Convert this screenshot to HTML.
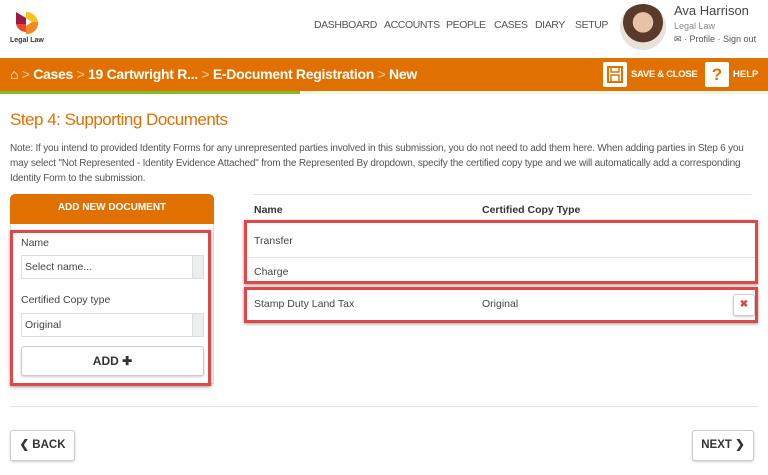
<!DOCTYPE html>
<html><head><meta charset="utf-8">
<style>
*{box-sizing:border-box;margin:0;padding:0}
body{width:768px;height:475px;background:#fff;font-family:"Liberation Sans",sans-serif;color:#444;position:relative;overflow:hidden}
.abs{position:absolute}
.nav{top:19px;font-size:10.5px;color:#555;letter-spacing:-0.4px}
.bar{left:0;top:58px;width:768px;height:33px;background:#e07000}
.green{left:0;top:91px;width:300px;height:3px;background:#7cbf2a}
.green2{left:300px;top:91px;width:468px;height:3px;background:#eef6e4}
.crumb{left:10px;top:66px;color:#fff;font-weight:bold;font-size:14px;white-space:nowrap;letter-spacing:-0.3px}
.crumb span{color:#f5c79a;font-weight:normal}
.btnw{background:#fff;border-radius:2px}
.red{border:3px solid #e04848;box-shadow:0 1px 3px rgba(0,0,0,.4)}
.sel{height:24px;border:1px solid #ddd;background:#fff;font-size:10.5px;padding:5px 3px;color:#444}
.sel i{position:absolute;right:0;top:0;width:11px;height:22px;background:#eee;border-left:1px solid #ddd}
.btn{border:1px solid #ccc;border-radius:3px;background:#fff;box-shadow:0 1px 2px rgba(0,0,0,.2);font-weight:bold;color:#333;font-size:11px;text-align:center}
.hl{height:1px;background:#e2e2e2}
.td{font-size:10.5px;color:#444}
</style></head><body>
<svg class="abs" style="left:14px;top:10px" width="26" height="26" viewBox="0 0 26 26">
<path d="M2 2 L12 8 L12 14 L2 14Z" fill="#9b1a45"/>
<path d="M2 14 L12 14 L12 22 A10 10 0 0 1 2 14Z" fill="#e84a2d"/>
<path d="M12 2 A12 12 0 0 1 24 12 L12 12Z" fill="#f7c21b"/>
<path d="M12 12 L24 12 A11 11 0 0 1 12 24Z" fill="#f38a1c"/>
<path d="M12 8 L18 12 L12 16Z" fill="#fff"/>
</svg>
<div class="abs" style="left:10px;top:37px;font-size:7px;font-weight:bold;color:#333">Legal Law</div>
<div class="abs nav" style="left:314px">DASHBOARD</div>
<div class="abs nav" style="left:384px">ACCOUNTS</div>
<div class="abs nav" style="left:446px">PEOPLE</div>
<div class="abs nav" style="left:494px">CASES</div>
<div class="abs nav" style="left:535px">DIARY</div>
<div class="abs nav" style="left:575px">SETUP</div>
<div class="abs" style="left:620px;top:4px;width:46px;height:46px;border-radius:50%;background:radial-gradient(circle at 50% 40%,#e8c2a8 0 28%,#5a3a2a 29% 55%,#e9e2da 56%)"></div>
<div class="abs" style="left:674px;top:3px;font-size:13px;color:#444">Ava Harrison</div>
<div class="abs" style="left:674px;top:21px;font-size:9px;color:#888">Legal Law</div>
<div class="abs" style="left:674px;top:34px;font-size:9px;color:#555">✉ · Profile · Sign out</div>

<div class="abs bar"></div>
<div class="abs green"></div><div class="abs green2"></div>
<div class="abs crumb">⌂ <span>&gt;</span> Cases <span>&gt;</span> 19 Cartwright R... <span>&gt;</span> E-Document Registration <span>&gt;</span> New</div>
<div class="abs btnw" style="left:603px;top:62px;width:24px;height:25px"><svg width="24" height="25"><rect x="5" y="5" width="14" height="15" fill="none" stroke="#e07000" stroke-width="2"/><rect x="8" y="5" width="8" height="5" fill="none" stroke="#e07000" stroke-width="1.5"/><rect x="8" y="13" width="8" height="7" fill="none" stroke="#e07000" stroke-width="1.5"/></svg></div>
<div class="abs" style="left:631px;top:69px;color:#fff;font-weight:bold;font-size:9.5px;letter-spacing:-0.3px">SAVE &amp; CLOSE</div>
<div class="abs btnw" style="left:705px;top:62px;width:24px;height:25px;color:#e07000;font-weight:bold;font-size:17px;text-align:center;line-height:25px">?</div>
<div class="abs" style="left:733px;top:69px;color:#fff;font-weight:bold;font-size:9.5px">HELP</div>

<div class="abs" style="left:10px;top:110px;font-size:17px;color:#e07000;letter-spacing:-0.5px">Step 4: Supporting Documents</div>
<div class="abs" style="left:10px;top:141px;width:752px;font-size:10px;line-height:15px;color:#555;letter-spacing:-0.2px">Note: If you intend to provided Identity Forms for any unrepresented parties involved in this submission, you do not need to add them here. When adding parties in Step 6 you may select "Not Represented - Identity Evidence Attached" from the Represented By dropdown, specify the certified copy type and we will automatically add a corresponding Identity Form to the submission.</div>

<div class="abs" style="left:10px;top:194px;width:204px;height:190px;border:1px solid #ddd;border-radius:5px 5px 0 0"></div>
<div class="abs" style="left:10px;top:194px;width:204px;height:30px;background:#e07000;border-radius:5px 5px 0 0;color:#fff;font-weight:bold;font-size:10px;text-align:center;line-height:28px">ADD NEW DOCUMENT</div>
<div class="abs red" style="left:10px;top:230px;width:201px;height:156px"></div>
<div class="abs td" style="left:21px;top:237px">Name</div>
<div class="abs sel" style="left:21px;top:255px;width:183px">Select name...<i></i></div>
<div class="abs td" style="left:21px;top:294px">Certified Copy type</div>
<div class="abs sel" style="left:21px;top:313px;width:183px">Original<i></i></div>
<div class="abs btn" style="left:21px;top:346px;width:183px;height:30px;line-height:28px;font-size:12px">ADD ✚</div>

<div class="abs hl" style="left:253px;top:194px;width:498px"></div>
<div class="abs td" style="left:254px;top:204px;font-weight:bold;color:#333">Name</div>
<div class="abs td" style="left:482px;top:204px;font-weight:bold;color:#333">Certified Copy Type</div>
<div class="abs red" style="left:244px;top:220px;width:514px;height:64px"></div>
<div class="abs td" style="left:254px;top:235px">Transfer</div>
<div class="abs hl" style="left:247px;top:257px;width:508px"></div>
<div class="abs td" style="left:254px;top:266px">Charge</div>
<div class="abs red" style="left:244px;top:287px;width:514px;height:36px"></div>
<div class="abs td" style="left:254px;top:298px">Stamp Duty Land Tax</div>
<div class="abs td" style="left:482px;top:298px">Original</div>
<div class="abs btn" style="left:733px;top:294px;width:22px;height:22px;color:#e04848;line-height:20px;font-size:10px">✖</div>

<div class="abs hl" style="left:10px;top:406px;width:748px"></div>
<div class="abs btn" style="left:10px;top:430px;width:65px;height:31px;line-height:29px;font-size:11.5px">❮ BACK</div>
<div class="abs btn" style="left:692px;top:430px;width:62px;height:31px;line-height:29px;font-size:11.5px">NEXT ❯</div>
</body></html>
